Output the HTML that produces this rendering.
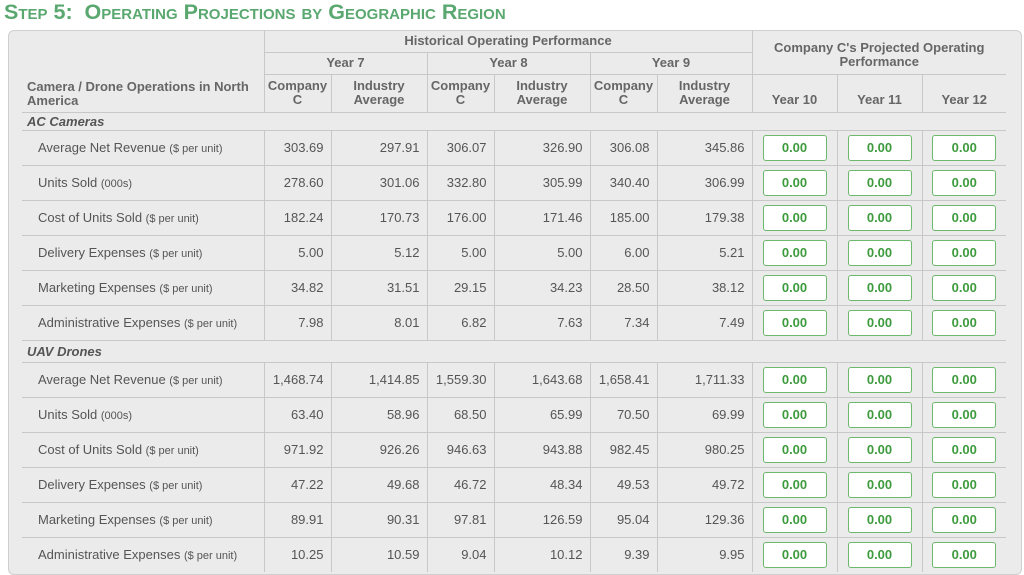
<!DOCTYPE html>
<html><head><style>
body{margin:0;width:1024px;height:575px;background:#fff;font-family:"Liberation Sans",Arial,sans-serif;position:relative;overflow:hidden}
h1{position:absolute;left:4px;top:0;margin:0;font-size:21.5px;font-weight:bold;color:#5aa870;font-variant:small-caps;letter-spacing:0;line-height:24px}
.box{position:absolute;left:8px;top:30px;width:1012px;height:543px;background:#ebebeb;border:1px solid #cfcfcf;border-radius:6px}
table{position:absolute;left:22px;top:30px;border-collapse:collapse;table-layout:fixed;width:984px}
td,th{padding:0 7px;font-size:13px;color:#555;white-space:nowrap;overflow:hidden}
th{padding:0 2px;font-weight:bold;color:#666;text-align:center;line-height:14px;border-left:1px solid #c8c8c8;border-bottom:1px solid #c8c8c8}
th.l{text-align:left;border-left:none;padding-left:5px;vertical-align:bottom;padding-bottom:4px}
tr.d td{height:34px;border-bottom:1px solid #c8c8c8;text-align:right;border-left:1px solid #c8c8c8}
tr.d td:first-child{text-align:left;border-left:none;padding-left:16px}
small{font-size:11px}
tr.s td{font-weight:bold;font-style:italic;color:#555;border-bottom:1px solid #c8c8c8;padding-left:5px}
.in{display:inline-block;width:62px;height:24px;border:1px solid #6cb86c;border-radius:3px;background:#fff;color:#3d9b3d;font-weight:bold;text-align:center;line-height:24px;font-size:13px}
td.i{text-align:center!important;padding:0}
</style></head><body>
<h1>Step 5:&nbsp; Operating Projections by Geographic Region</h1>
<div class="box"></div>
<table>
<colgroup><col style="width:242px"><col style="width:67px"><col style="width:96px"><col style="width:67px"><col style="width:96px"><col style="width:67px"><col style="width:95px"><col style="width:85px"><col style="width:85px"><col style="width:84px"></colgroup>
<tr style="height:22px"><th class="l" rowspan="3">Camera / Drone Operations in North<br>America</th><th colspan="6">Historical Operating Performance</th><th colspan="3" rowspan="2" style="padding-top:6px">Company C's Projected Operating<br>Performance</th></tr>
<tr style="height:22px"><th colspan="2">Year 7</th><th colspan="2">Year 8</th><th colspan="2">Year 9</th></tr>
<tr style="height:38px"><th>Company<br>C</th><th>Industry<br>Average</th><th>Company<br>C</th><th>Industry<br>Average</th><th>Company<br>C</th><th>Industry<br>Average</th><th style="vertical-align:bottom;padding-bottom:5px">Year 10</th><th style="vertical-align:bottom;padding-bottom:5px">Year 11</th><th style="vertical-align:bottom;padding-bottom:5px">Year 12</th></tr>
<tr class="s" style="height:18px"><td colspan="10">AC Cameras</td></tr>
<tr class="d"><td>Average Net Revenue <small>($ per unit)</small></td><td>303.69</td><td>297.91</td><td>306.07</td><td>326.90</td><td>306.08</td><td>345.86</td><td class="i"><span class="in">0.00</span></td><td class="i"><span class="in">0.00</span></td><td class="i"><span class="in">0.00</span></td></tr>
<tr class="d"><td>Units Sold <small>(000s)</small></td><td>278.60</td><td>301.06</td><td>332.80</td><td>305.99</td><td>340.40</td><td>306.99</td><td class="i"><span class="in">0.00</span></td><td class="i"><span class="in">0.00</span></td><td class="i"><span class="in">0.00</span></td></tr>
<tr class="d"><td>Cost of Units Sold <small>($ per unit)</small></td><td>182.24</td><td>170.73</td><td>176.00</td><td>171.46</td><td>185.00</td><td>179.38</td><td class="i"><span class="in">0.00</span></td><td class="i"><span class="in">0.00</span></td><td class="i"><span class="in">0.00</span></td></tr>
<tr class="d"><td>Delivery Expenses <small>($ per unit)</small></td><td>5.00</td><td>5.12</td><td>5.00</td><td>5.00</td><td>6.00</td><td>5.21</td><td class="i"><span class="in">0.00</span></td><td class="i"><span class="in">0.00</span></td><td class="i"><span class="in">0.00</span></td></tr>
<tr class="d"><td>Marketing Expenses <small>($ per unit)</small></td><td>34.82</td><td>31.51</td><td>29.15</td><td>34.23</td><td>28.50</td><td>38.12</td><td class="i"><span class="in">0.00</span></td><td class="i"><span class="in">0.00</span></td><td class="i"><span class="in">0.00</span></td></tr>
<tr class="d"><td>Administrative Expenses <small>($ per unit)</small></td><td>7.98</td><td>8.01</td><td>6.82</td><td>7.63</td><td>7.34</td><td>7.49</td><td class="i"><span class="in">0.00</span></td><td class="i"><span class="in">0.00</span></td><td class="i"><span class="in">0.00</span></td></tr>
<tr class="s" style="height:22px"><td colspan="10">UAV Drones</td></tr>
<tr class="d"><td>Average Net Revenue <small>($ per unit)</small></td><td>1,468.74</td><td>1,414.85</td><td>1,559.30</td><td>1,643.68</td><td>1,658.41</td><td>1,711.33</td><td class="i"><span class="in">0.00</span></td><td class="i"><span class="in">0.00</span></td><td class="i"><span class="in">0.00</span></td></tr>
<tr class="d"><td>Units Sold <small>(000s)</small></td><td>63.40</td><td>58.96</td><td>68.50</td><td>65.99</td><td>70.50</td><td>69.99</td><td class="i"><span class="in">0.00</span></td><td class="i"><span class="in">0.00</span></td><td class="i"><span class="in">0.00</span></td></tr>
<tr class="d"><td>Cost of Units Sold <small>($ per unit)</small></td><td>971.92</td><td>926.26</td><td>946.63</td><td>943.88</td><td>982.45</td><td>980.25</td><td class="i"><span class="in">0.00</span></td><td class="i"><span class="in">0.00</span></td><td class="i"><span class="in">0.00</span></td></tr>
<tr class="d"><td>Delivery Expenses <small>($ per unit)</small></td><td>47.22</td><td>49.68</td><td>46.72</td><td>48.34</td><td>49.53</td><td>49.72</td><td class="i"><span class="in">0.00</span></td><td class="i"><span class="in">0.00</span></td><td class="i"><span class="in">0.00</span></td></tr>
<tr class="d"><td>Marketing Expenses <small>($ per unit)</small></td><td>89.91</td><td>90.31</td><td>97.81</td><td>126.59</td><td>95.04</td><td>129.36</td><td class="i"><span class="in">0.00</span></td><td class="i"><span class="in">0.00</span></td><td class="i"><span class="in">0.00</span></td></tr>
<tr class="d"><td style="border-bottom:none">Administrative Expenses <small>($ per unit)</small></td><td style="border-bottom:none">10.25</td><td style="border-bottom:none">10.59</td><td style="border-bottom:none">9.04</td><td style="border-bottom:none">10.12</td><td style="border-bottom:none">9.39</td><td style="border-bottom:none">9.95</td><td class="i" style="border-bottom:none"><span class="in">0.00</span></td><td class="i" style="border-bottom:none"><span class="in">0.00</span></td><td class="i" style="border-bottom:none"><span class="in">0.00</span></td></tr>
</table>
</body></html>
